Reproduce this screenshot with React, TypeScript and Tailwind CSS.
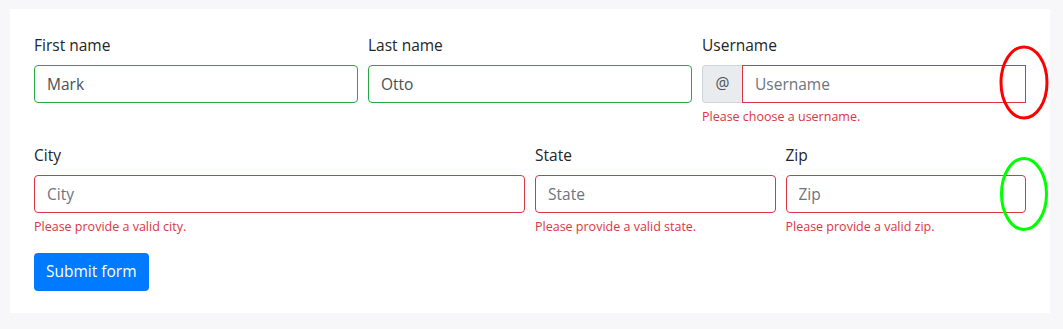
import React from 'react';

const font = { fontFamily: '"Segoe UI", "Open Sans", "Noto Sans", sans-serif' };

interface FieldProps {
  label: string;
  placeholder: string;
  value?: string;
  valid?: boolean;
  feedback?: string;
  className: string;
}

const Field: React.FC<FieldProps> = ({ label, placeholder, value, valid, feedback, className }) => (
  <div className={`${className} px-[5px] mb-4`}>
    <label className="block mb-2 text-[15.5px] leading-6 text-[#212529]">{label}</label>
    <input
      defaultValue={value}
      placeholder={placeholder}
      className={`block w-full h-[38px] px-3 text-[15.5px] text-[#495057] placeholder:text-[#6c757d] bg-white border rounded outline-none ${
        valid ? 'border-[#28a745]' : 'border-[#dc3545]'
      }`}
    />
    {feedback && <div className="mt-1 text-[12.5px] leading-[20px] text-[#dc3545]">{feedback}</div>}
  </div>
);

export default function App() {
  return (
    <div className="relative min-h-[329px] bg-[#f7f7f9] pt-[9px] pl-[10px] pr-[13px] pb-[16px]" style={font}>
      <form className="bg-white px-6 pt-6 pb-[22px]">
        <div className="flex -mx-[5px]">
          <Field className="w-1/3" label="First name" placeholder="First name" value="Mark" valid />
          <Field className="w-1/3" label="Last name" placeholder="Last name" value="Otto" valid />
          <div className="w-1/3 px-[5px] mb-4">
            <label className="block mb-2 text-[15.5px] leading-6 text-[#212529]">Username</label>
            <div className="flex">
              <span className="flex items-center justify-center w-10 h-[38px] text-[15.5px] text-[#495057] bg-[#e9ecef] border border-r-0 border-[#ced4da] rounded-l">
                @
              </span>
              <input
                placeholder="Username"
                className="flex-1 min-w-0 h-[38px] px-3 text-[15.5px] text-[#495057] placeholder:text-[#6c757d] bg-white border border-[#dc3545] outline-none"
              />
            </div>
            <div className="mt-1 text-[12.5px] leading-[20px] text-[#dc3545]">Please choose a username.</div>
          </div>
        </div>
        <div className="flex -mx-[5px]">
          <Field className="w-1/2" label="City" placeholder="City" feedback="Please provide a valid city." />
          <Field className="w-1/4" label="State" placeholder="State" feedback="Please provide a valid state." />
          <Field className="w-1/4" label="Zip" placeholder="Zip" feedback="Please provide a valid zip." />
        </div>
        <button type="button" className="h-[38px] px-3 text-[15.5px] text-white bg-[#007bff] rounded">
          Submit form
        </button>
      </form>
      <svg className="absolute left-0 top-0 pointer-events-none" width="1063" height="329">
        <ellipse cx="1024" cy="82.5" rx="23" ry="35.5" fill="none" stroke="#ff0000" strokeWidth="3" />
        <ellipse cx="1024" cy="194" rx="22.5" ry="35.5" fill="none" stroke="#00ff00" strokeWidth="3" />
      </svg>
    </div>
  );
}
